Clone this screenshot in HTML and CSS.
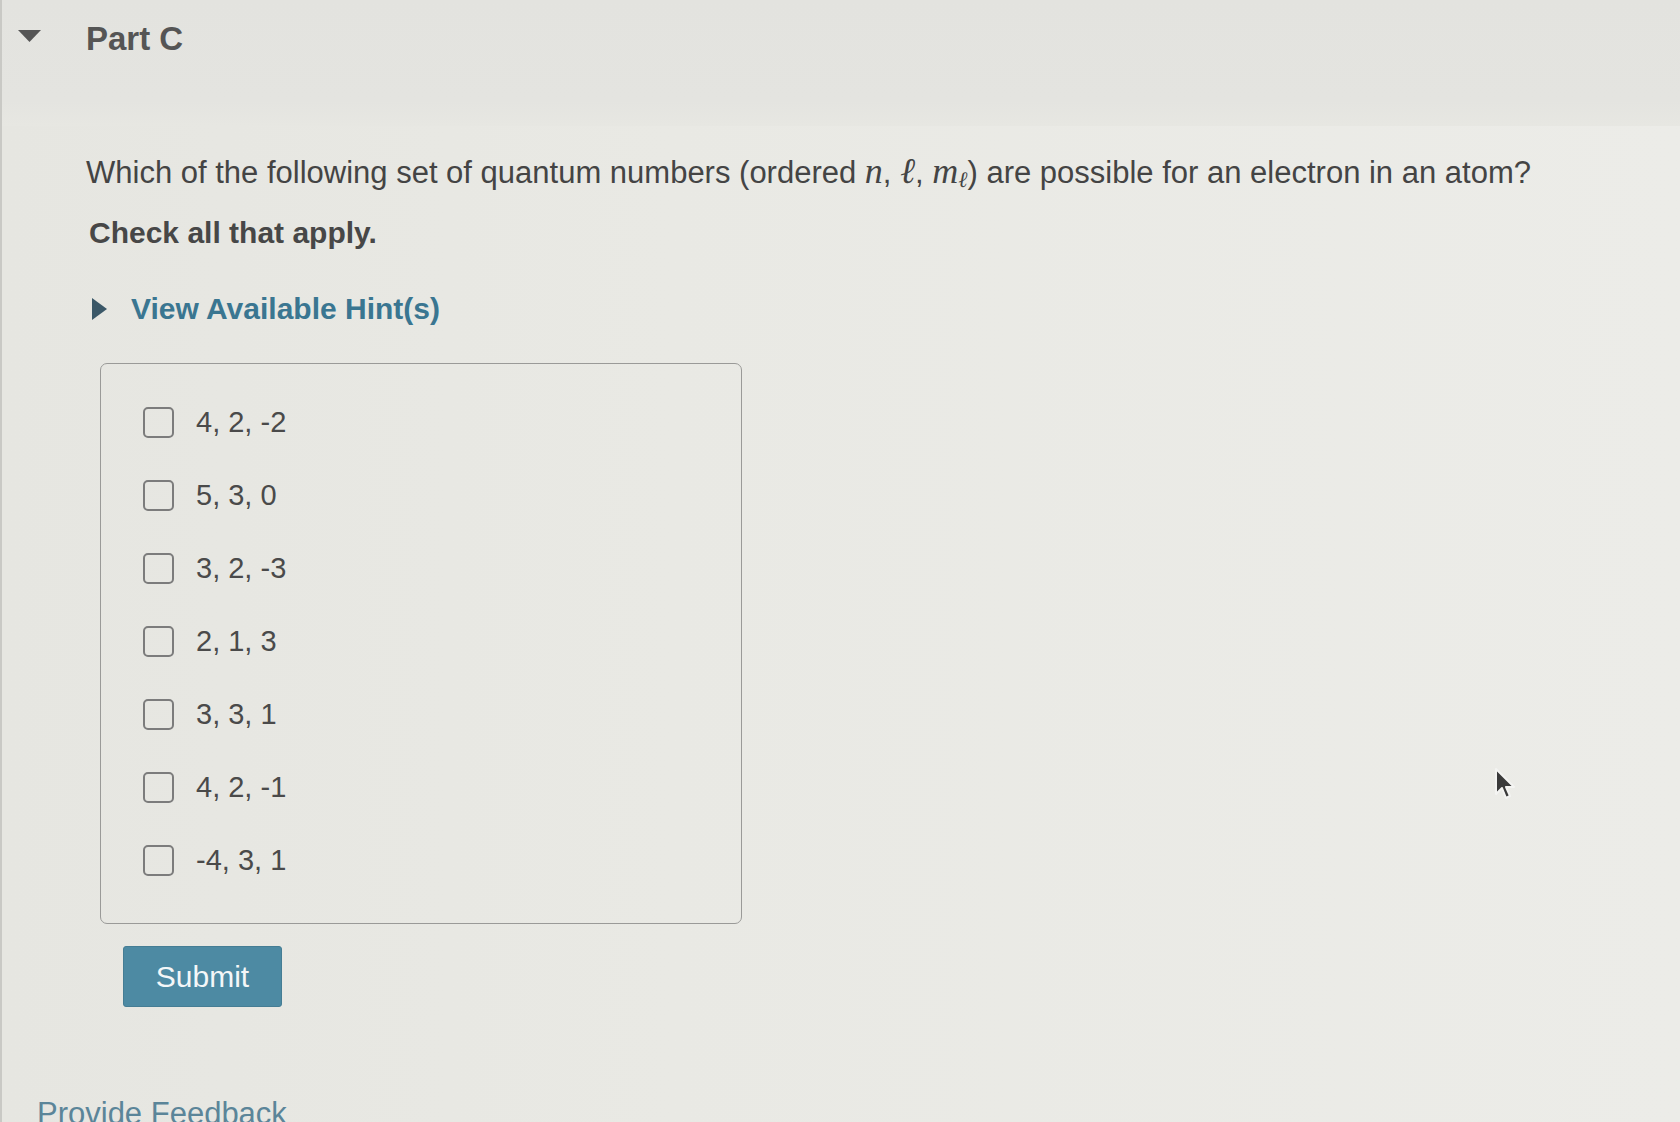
FILE: index.html
```html
<!DOCTYPE html>
<html lang="en">
<head>
  <meta charset="UTF-8">
  <meta name="viewport" content="width=device-width, initial-scale=1.0">
  <title>Part C</title>
  <link rel="stylesheet" href="styles.css">
</head>
<body>
  <div class="page">
    <!-- part header -->
    <div class="part-header">
      <svg class="caret-down" width="25" height="14" viewBox="0 0 25 14"><path d="M1 1 L24 1 L12.5 13 Z" fill="#555"/></svg>
      <h2 class="part-title">Part C</h2>
    </div>

    <div class="content">
      <p class="question">Which of the following set of quantum numbers (ordered <span class="math">n</span>, <span class="math">ℓ</span>, <span class="math">m<sub>ℓ</sub></span>) are possible for an electron in an atom?</p>
      <p class="instruction">Check all that apply.</p>

      <div class="hints">
        <svg class="caret-right" width="17" height="24" viewBox="0 0 17 24"><path d="M1 1 L16 12 L1 23 Z" fill="#3b5868"/></svg>
        <span>View Available Hint(s)</span>
      </div>

      <!-- answer choices -->
      <div class="choices">
        <label class="choice"><span class="box"></span>4, 2, -2</label>
        <label class="choice"><span class="box"></span>5, 3, 0</label>
        <label class="choice"><span class="box"></span>3, 2, -3</label>
        <label class="choice"><span class="box"></span>2, 1, 3</label>
        <label class="choice"><span class="box"></span>3, 3, 1</label>
        <label class="choice"><span class="box"></span>4, 2, -1</label>
        <label class="choice"><span class="box"></span>-4, 3, 1</label>
      </div>

      <button class="btn">Submit</button>
    </div>

    <a class="feedback" href="#">Provide Feedback</a>

    <svg class="cursor" width="24" height="36" viewBox="0 0 24 36"><path d="M2 2 L2 27 L8 21 L12 31 L16 29 L12 20 L20 20 Z" fill="#3a3a3a" stroke="#f4f4f2" stroke-width="2" stroke-linejoin="round"/></svg>
  </div>
</body>
</html>
```

FILE: styles.css
```css
/* page */
body {
  margin: 0;
  padding: 0;
  font-family: "Liberation Sans", Arial, sans-serif;
  background: linear-gradient(90deg, #e6e6e1 0%, #e9e9e4 40%, #ecece8 100%);
  color: #444;
  overflow: hidden;
}

.page {
  position: relative;
  height: 1122px;
  border-left: 2px solid #c9c9c5;
}

.part-header {
  display: flex;
  align-items: flex-start;
  height: 126px;
  padding-left: 15px;
  background: linear-gradient(180deg, #e3e3df 0%, #e4e4e0 80%, #e7e7e2 100%);
}

.caret-down {
  margin-top: 29px;
}

.part-title {
  margin: 19px 0 0 44px;
  font-size: 33px;
  line-height: 40px;
  font-weight: bold;
  color: #555;
}

.content {
  padding-left: 84px;
}

.question {
  margin: 25px 0 0;
  font-size: 31px;
  line-height: 40px;
  color: #444;
}

.math {
  font-family: "Liberation Serif", "Times New Roman", serif;
  font-style: italic;
  font-size: 36px;
}

.math sub {
  font-size: 22px;
  vertical-align: -4px;
  line-height: 0;
}

.instruction {
  margin: 20px 0 0 3px;
  font-size: 30px;
  line-height: 40px;
  font-weight: bold;
  color: #474747;
}

.hints {
  display: flex;
  align-items: center;
  margin: 36px 0 0 5px;
  font-size: 30px;
  line-height: 40px;
  font-weight: bold;
  color: #3a7691;
}

.caret-right {
  margin-right: 23px;
}

.choices {
  width: 640px;
  margin: 34px 0 0 14px;
  padding: 22px 0 26px;
  border: 1.5px solid #9a9a98;
  border-radius: 7px;
}

.choice {
  display: flex;
  align-items: center;
  height: 73px;
  padding-left: 42px;
  font-size: 29px;
  color: #4a4a4a;
}

.box {
  width: 27px;
  height: 27px;
  margin-right: 22px;
  border: 2.5px solid #7c7c7c;
  border-radius: 5px;
}

.btn {
  display: block;
  width: 159px;
  height: 61px;
  margin: 22px 0 0 37px;
  background-color: #4d8aa3;
  color: #f4f7f8;
  border: 1px solid #457d94;
  border-radius: 3px;
  font-family: "Liberation Sans", Arial, sans-serif;
  font-size: 30px;
}

.feedback {
  display: block;
  margin: 87px 0 0 35px;
  font-size: 31px;
  line-height: 40px;
  color: #5b8599;
  text-decoration: none;
}

.cursor {
  position: absolute;
  left: 1492px;
  top: 767px;
}
```
